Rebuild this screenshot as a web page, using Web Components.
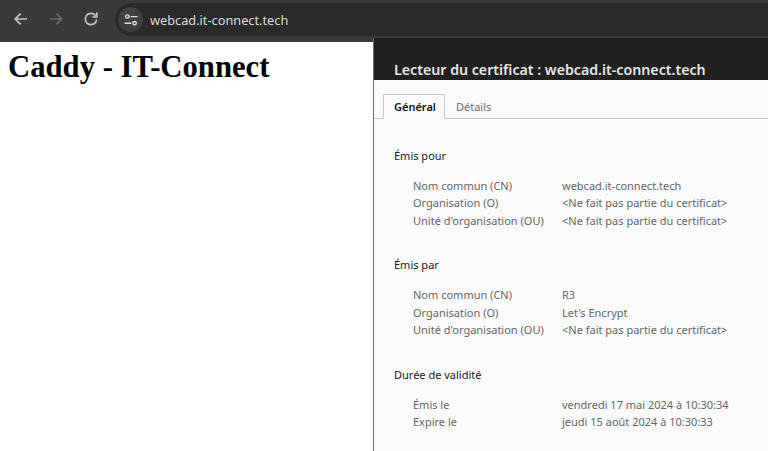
<!DOCTYPE html>
<html lang="fr">
<head>
<meta charset="utf-8">
<title>Caddy - IT-Connect</title>
<style>
  html, body { margin: 0; padding: 0; height: 100%; overflow: hidden; background: #fff; }
  body { display: flex; flex-direction: column; width: 768px; height: 451px; }
</style>
</head>
<body>
<browser-bar url="webcad.it-connect.tech"></browser-bar>
<split-view>
  <page-heading slot="page">Caddy - IT-Connect</page-heading>
  <cert-viewer slot="dialog" host-name="webcad.it-connect.tech">
    <cert-section heading="Émis pour">
      <cert-row label="Nom commun (CN)">webcad.it-connect.tech</cert-row>
      <cert-row label="Organisation (O)">&lt;Ne fait pas partie du certificat&gt;</cert-row>
      <cert-row label="Unité d'organisation (OU)">&lt;Ne fait pas partie du certificat&gt;</cert-row>
    </cert-section>
    <cert-section heading="Émis par">
      <cert-row label="Nom commun (CN)">R3</cert-row>
      <cert-row label="Organisation (O)">Let's Encrypt</cert-row>
      <cert-row label="Unité d'organisation (OU)">&lt;Ne fait pas partie du certificat&gt;</cert-row>
    </cert-section>
    <cert-section heading="Durée de validité">
      <cert-row label="Émis le">vendredi 17 mai 2024 à 10:30:34</cert-row>
      <cert-row label="Expire le">jeudi 15 août 2024 à 10:30:33</cert-row>
    </cert-section>
  </cert-viewer>
</split-view>

<script>
class BrowserBar extends HTMLElement {
  constructor() {
    super();
    this.attachShadow({ mode: 'open' });
  }

  connectedCallback() {
    this.shadowRoot.innerHTML = `
      <style>
        :host {
          display: flex;
          align-items: flex-start;
          flex: none;
          height: 42px;
          box-sizing: border-box;
          background: #3a3a3a;
          padding: 3px 0 0 12px;
          font-family: "Noto Sans", "Open Sans", sans-serif;
        }
        svg { display: block; flex: none; }
        .nav { width: 18px; height: 18px; margin: 7px 17px 0 0; fill: none; stroke-width: 1.7; }
        .omni {
          display: flex;
          align-items: center;
          flex: 1;
          height: 33px;
          margin-left: -2px;
          border-radius: 17px 0 0 17px;
          background: #2a2a2a;
          padding-left: 3px;
        }
        .tune {
          display: flex;
          align-items: center;
          justify-content: center;
          width: 25px;
          height: 25px;
          border-radius: 50%;
          background: #3f3f3f;
          margin-right: 7px;
        }
        .url { color: #dcdcdc; font-size: 12.75px; line-height: 18px; }
      </style>
      <svg class="nav" viewBox="0 0 18 18" stroke="#c4c4c4"><path d="M15 9H3.6M8.6 3.6 3.2 9l5.4 5.4"/></svg>
      <svg class="nav" viewBox="0 0 18 18" stroke="#6a6a6a"><path d="M3 9h11.4M9.4 3.6 14.8 9l-5.4 5.4"/></svg>
      <svg class="nav" viewBox="0 0 18 18" stroke="#c4c4c4"><path d="M14.6 9.6a5.7 5.7 0 1 1-1.5-4.5L14.6 6.6"/><path d="M14.8 2.6v4.4h-4.4" fill="none"/></svg>
      <div class="omni">
        <div class="tune">
          <svg width="14" height="14" viewBox="0 0 14 14" fill="none" stroke="#dedede" stroke-width="1.4">
            <circle cx="3.4" cy="3.6" r="1.7"/><path d="M6.6 3.6H13.4M.6 10.2H7.4"/><circle cx="10.6" cy="10.2" r="1.7"/>
          </svg>
        </div>
        <span class="url">${this.getAttribute('url')}</span>
      </div>
    `;
  }
}

class SplitView extends HTMLElement {
  constructor() {
    super();
    this.attachShadow({ mode: 'open' });
    this.shadowRoot.innerHTML = `
      <style>
        :host { display: flex; flex: 1; min-height: 0; background: #fff; }
        .page { flex: none; width: 373px; }
        .dialog { flex: 1; min-width: 0; display: flex; margin-top: -4px; }
      </style>
      <div class="page"><slot name="page"></slot></div>
      <div class="dialog"><slot name="dialog"></slot></div>
    `;
  }
}

class PageHeading extends HTMLElement {
  constructor() {
    super();
    this.attachShadow({ mode: 'open' });
    this.shadowRoot.innerHTML = `
      <style>
        :host {
          display: block;
          padding: 7px 0 0 8px;
          color: #000;
          font: bold 30.7px/37px "Liberation Serif", "Times New Roman", serif;
          white-space: nowrap;
        }
      </style>
      <slot></slot>
    `;
  }
}

class CertViewer extends HTMLElement {
  constructor() {
    super();
    this.attachShadow({ mode: 'open' });
  }

  connectedCallback() {
    this.shadowRoot.innerHTML = `
      <style>
        :host {
          display: flex;
          flex-direction: column;
          flex: 1;
          box-sizing: border-box;
          min-width: 0;
          border-left: 1px solid #6f6f6f;
          background: #fbfbfb;
          font-family: "Noto Sans", "Open Sans", sans-serif;
        }
        header {
          flex: none;
          height: 42px;
          box-sizing: border-box;
          padding: 22px 0 0 20px;
          background: #202020;
          color: #e6e6e6;
          font-size: 14.2px;
          font-weight: 600;
          line-height: 20px;
          white-space: nowrap;
        }
        .tabs {
          display: flex;
          flex: none;
          height: 25px;
          margin-top: 14px;
          padding-left: 9px;
          box-sizing: border-box;
          border-bottom: 1px solid #c9c9c9;
          font-size: 11px;
        }
        .tab { padding: 0 11px; line-height: 25px; color: #6d6d6d; }
        .tab.on {
          height: 25px;
          box-sizing: border-box;
          padding: 0 8px 0 10px;
          line-height: 24px;
          border: 1px solid #c9c9c9;
          border-bottom: 1px solid #fbfbfb;
          color: #111;
          font-weight: 600;
        }
        .body { flex: 1; padding: 28px 0 0 20px; min-height: 0; }
      </style>
      <header>Lecteur du certificat : ${this.getAttribute('host-name')}</header>
      <div class="tabs">
        <div class="tab on">Général</div>
        <div class="tab">Détails</div>
      </div>
      <div class="body"><slot></slot></div>
    `;
  }
}

class CertSection extends HTMLElement {
  constructor() {
    super();
    this.attachShadow({ mode: 'open' });
  }

  connectedCallback() {
    this.shadowRoot.innerHTML = `
      <style>
        :host { display: block; margin-bottom: 27.3px; }
        h3 {
          margin: 0 0 12px;
          font-size: 11px;
          font-weight: 400;
          line-height: 18px;
          color: #1a1a1a;
        }
        .rows { padding-left: 19px; }
      </style>
      <h3>${this.getAttribute('heading')}</h3>
      <div class="rows"><slot></slot></div>
    `;
  }
}

class CertRow extends HTMLElement {
  constructor() {
    super();
    this.attachShadow({ mode: 'open' });
  }

  connectedCallback() {
    this.shadowRoot.innerHTML = `
      <style>
        :host {
          display: grid;
          grid-template-columns: 149px 1fr;
          height: 17.4px;
          font-size: 11px;
          line-height: 17px;
          color: #666;
          white-space: nowrap;
        }
      </style>
      <span>${this.getAttribute('label')}</span>
      <span><slot></slot></span>
    `;
  }
}

customElements.define('browser-bar', BrowserBar);
customElements.define('split-view', SplitView);
customElements.define('page-heading', PageHeading);
customElements.define('cert-viewer', CertViewer);
customElements.define('cert-section', CertSection);
customElements.define('cert-row', CertRow);
</script>
</body>
</html>
